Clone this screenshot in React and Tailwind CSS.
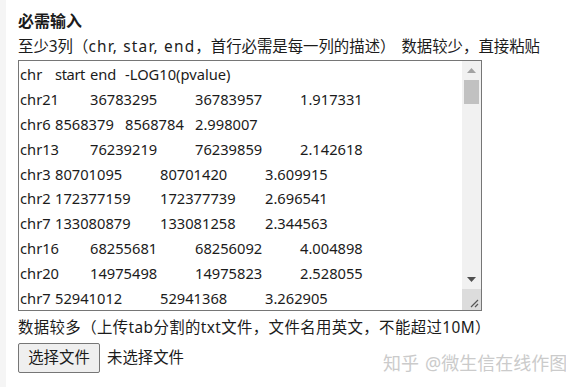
import React from "react";

const rows = [
  [["chr", 35], ["start", 35, "tracking-[-0.4px]"], ["end", 35], ["-LOG10(pvalue)", 0]],
  [["chr21", 70], ["36783295", 105], ["36783957", 105], ["1.917331", 0]],
  [["chr6", 35], ["8568379", 70], ["8568784", 70], ["2.998007", 0]],
  [["chr13", 70], ["76239219", 105], ["76239859", 105], ["2.142618", 0]],
  [["chr3", 35], ["80701095", 105], ["80701420", 105], ["3.609915", 0]],
  [["chr2", 35], ["172377159", 105], ["172377739", 105], ["2.696541", 0]],
  [["chr7", 35], ["133080879", 105], ["133081258", 105], ["2.344563", 0]],
  [["chr16", 70], ["68255681", 105], ["68256092", 105], ["4.004898", 0]],
  [["chr20", 70], ["14975498", 105], ["14975823", 105], ["2.528055", 0]],
  [["chr7", 35], ["52941012", 105], ["52941368", 105], ["3.262905", 0]],
];

function Row({ cells }) {
  return (
    <div className="flex h-[24.8px] items-center whitespace-nowrap">
      {cells.map(([t, w, c], i) => (
        <span
          key={i}
          className={"shrink-0 " + (c || "")}
          style={w ? { width: w } : undefined}
        >
          {t}
        </span>
      ))}
    </div>
  );
}

export default function App() {
  return (
    <div
      className="relative flex h-[387px] w-[566px] overflow-hidden bg-white text-[15.4px] text-[#1b1b1b]"
      style={{ fontFamily: '"Noto Sans", "Noto Sans CJK SC", sans-serif' }}
    >
      <div className="w-[6px] shrink-0 bg-[#f5f5f5]" />
      <div className="flex flex-col pl-[12px] pt-[9px]">
        <div className="text-[16px] font-bold leading-[24px]">必需输入</div>
        <div className="mt-[2px] leading-[24px] whitespace-nowrap">
          至少3列（<span className="tracking-[1.2px]">chr, star, end</span>，首行必需是每一列的描述）<span className="inline-block w-[6px]" />数据较少，直接粘贴
        </div>
        <div className="mt-[1px] flex h-[251px] w-[464px] border border-[#767676] bg-white text-[14.7px]">
          <div className="flex-1 overflow-hidden pl-[1px] pt-[1px]">
            {rows.map((r, i) => (
              <Row key={i} cells={r} />
            ))}
          </div>
          <div className="flex w-[19px] shrink-0 flex-col bg-[#f1f1f1]">
            <div className="flex h-[19px] items-center justify-center">
              <svg width="9" height="5" viewBox="0 0 9 5">
                <path d="M0 5 L4.5 0 L9 5 Z" fill="#a3a3a3" />
              </svg>
            </div>
            <div className="mx-[2px] h-[24px] bg-[#c1c1c1]" />
            <div className="flex-1" />
            <div className="flex h-[19px] items-center justify-center">
              <svg width="9" height="5" viewBox="0 0 9 5">
                <path d="M0 0 L9 0 L4.5 5 Z" fill="#505050" />
              </svg>
            </div>
            <div className="relative h-[21px] bg-[#dcdcdc]">
              <svg
                className="absolute bottom-[2px] right-[2px]"
                width="10"
                height="10"
                viewBox="0 0 10 10"
              >
                <path d="M9 2 L2 9 M9 6 L6 9" stroke="#555" strokeWidth="1.2" />
              </svg>
            </div>
          </div>
        </div>
        <div className="mt-[5px] leading-[24px] whitespace-nowrap tracking-[0.4px]">
          数据较多（上传tab分割的txt文件，文件名用英文，不能超过10M）
        </div>
        <div className="mt-[3px] flex items-center gap-[7px]">
          <button className="flex h-[30px] w-[82px] items-center justify-center rounded-[2px] border border-[#767676] bg-[#efefef] text-[15.4px] text-[#1b1b1b]">
            选择文件
          </button>
          <span>未选择文件</span>
        </div>
      </div>
      <div className="absolute left-[383px] top-[350px] flex items-center gap-[6px] whitespace-nowrap text-[18px] leading-[26px] text-[#cbcbcb]">
        <span>知乎</span>
        <span>@微生信在线作图</span>
      </div>
    </div>
  );
}
